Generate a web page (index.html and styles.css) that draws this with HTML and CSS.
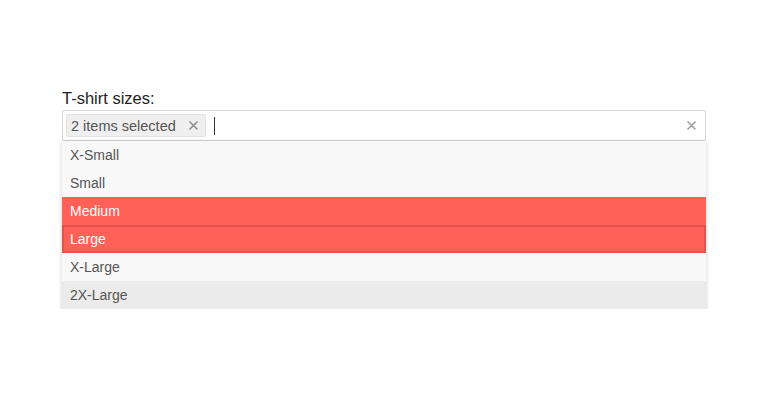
FILE: index.html
```html
<!DOCTYPE html>
<html lang="en">
<head>
    <meta charset="UTF-8">
    <title>T-shirt sizes</title>
    <link rel="stylesheet" href="styles.css">
</head>
<body>
    <div class="field">
        <label class="label">T-shirt sizes:</label>
        <div class="select">
            <div class="control">
                <span class="tag">2 items selected
                    <svg class="tag-x" width="11" height="11" viewBox="0 0 11 11"><path d="M1.5 1.5L9.5 9.5M9.5 1.5L1.5 9.5" stroke="#8f8f8f" stroke-width="1.6"/></svg>
                </span>
                <span class="caret"></span>
                <svg class="clear" width="11" height="11" viewBox="0 0 11 11"><path d="M1.5 1.5L9.5 9.5M9.5 1.5L1.5 9.5" stroke="#a0a0a0" stroke-width="1.6"/></svg>
            </div>
            <ul class="menu">
                <li class="option">X-Small</li>
                <li class="option">Small</li>
                <li class="option selected">Medium</li>
                <li class="option selected active">Large</li>
                <li class="option">X-Large</li>
                <li class="option hover">2X-Large</li>
            </ul>
        </div>
    </div>
</body>
</html>
```

FILE: styles.css
```css
body {
    font-family: 'Liberation Sans', Arial, sans-serif;
    margin: 0;
    padding: 87px 64px 0 62px;
    background: #fff;
    color: #222;
}

.label {
    display: block;
    font-size: 16.5px;
    line-height: 22px;
    margin-bottom: 1px;
}

.select {
    width: 644px;
}

.control {
    display: flex;
    align-items: center;
    height: 29px;
    padding: 0 3px;
    border: 1px solid #d4d4d4;
    border-radius: 2px;
    background: #fff;
}

.tag {
    display: flex;
    align-items: center;
    height: 23px;
    padding: 0 6px 0 4px;
    background: #efefef;
    border: 1px solid #e2e2e2;
    border-radius: 2px;
    font-size: 14.5px;
    color: #555;
    box-sizing: border-box;
}

.tag-x {
    margin-left: 12px;
}

.caret {
    width: 1px;
    height: 18px;
    margin-left: 8px;
    background: #333;
}

.clear {
    margin-left: auto;
    margin-right: 5px;
}

.menu {
    list-style: none;
    margin: 0;
    padding: 0;
    background: #f8f8f8;
    box-shadow: 0 1px 4px rgba(0, 0, 0, 0.22);
}

.option {
    height: 28px;
    line-height: 28px;
    padding: 0 8px;
    font-size: 14px;
    color: #555;
    box-sizing: border-box;
}

.selected {
    background: #ff6158;
    color: #fff;
}

.active {
    border: 2px solid #e5524a;
    line-height: 24px;
    padding: 0 6px;
}

.hover {
    background: #ebebeb;
}
```
